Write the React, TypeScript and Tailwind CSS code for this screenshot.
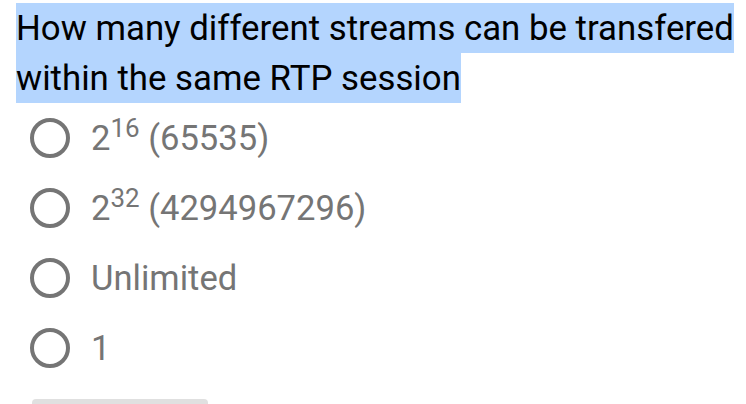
import React from "react";

function Radio() {
  return (
    <span className="block w-[40px] h-[40px] rounded-full border-[4px] border-[#757575] shrink-0" />
  );
}

const options: React.ReactNode[] = [
  <>2<sup>16</sup> (65535)</>,
  <>2<sup>32</sup> (4294967296)</>,
  <>Unlimited</>,
  <>1</>,
];

export default function App() {
  return (
    <div className="w-[746px] h-[404px] overflow-hidden bg-white" style={{ fontFamily: "Roboto, 'Noto Sans', sans-serif" }}>
      <div className="pt-[3px] pl-[16px] text-[34.8px] leading-[50px] text-black">
        <div className="w-fit whitespace-nowrap bg-[#b4d5fe]">How many different streams can be transfered</div>
        <div className="w-fit whitespace-nowrap bg-[#b4d5fe]">within the same RTP session</div>
      </div>
      <div className="flex flex-col">
        {options.map((o, i) => (
          <div key={i} className="h-[70px] flex items-center pl-[30px] gap-[21px]">
            <Radio />
            <span className="text-[34.6px] leading-none text-[#757575]">{o}</span>
          </div>
        ))}
      </div>
      <div className="ml-[32px] mt-[16px] w-[176px] h-[10px] rounded-t-[4px] bg-[#e0e0e0]" />
    </div>
  );
}
